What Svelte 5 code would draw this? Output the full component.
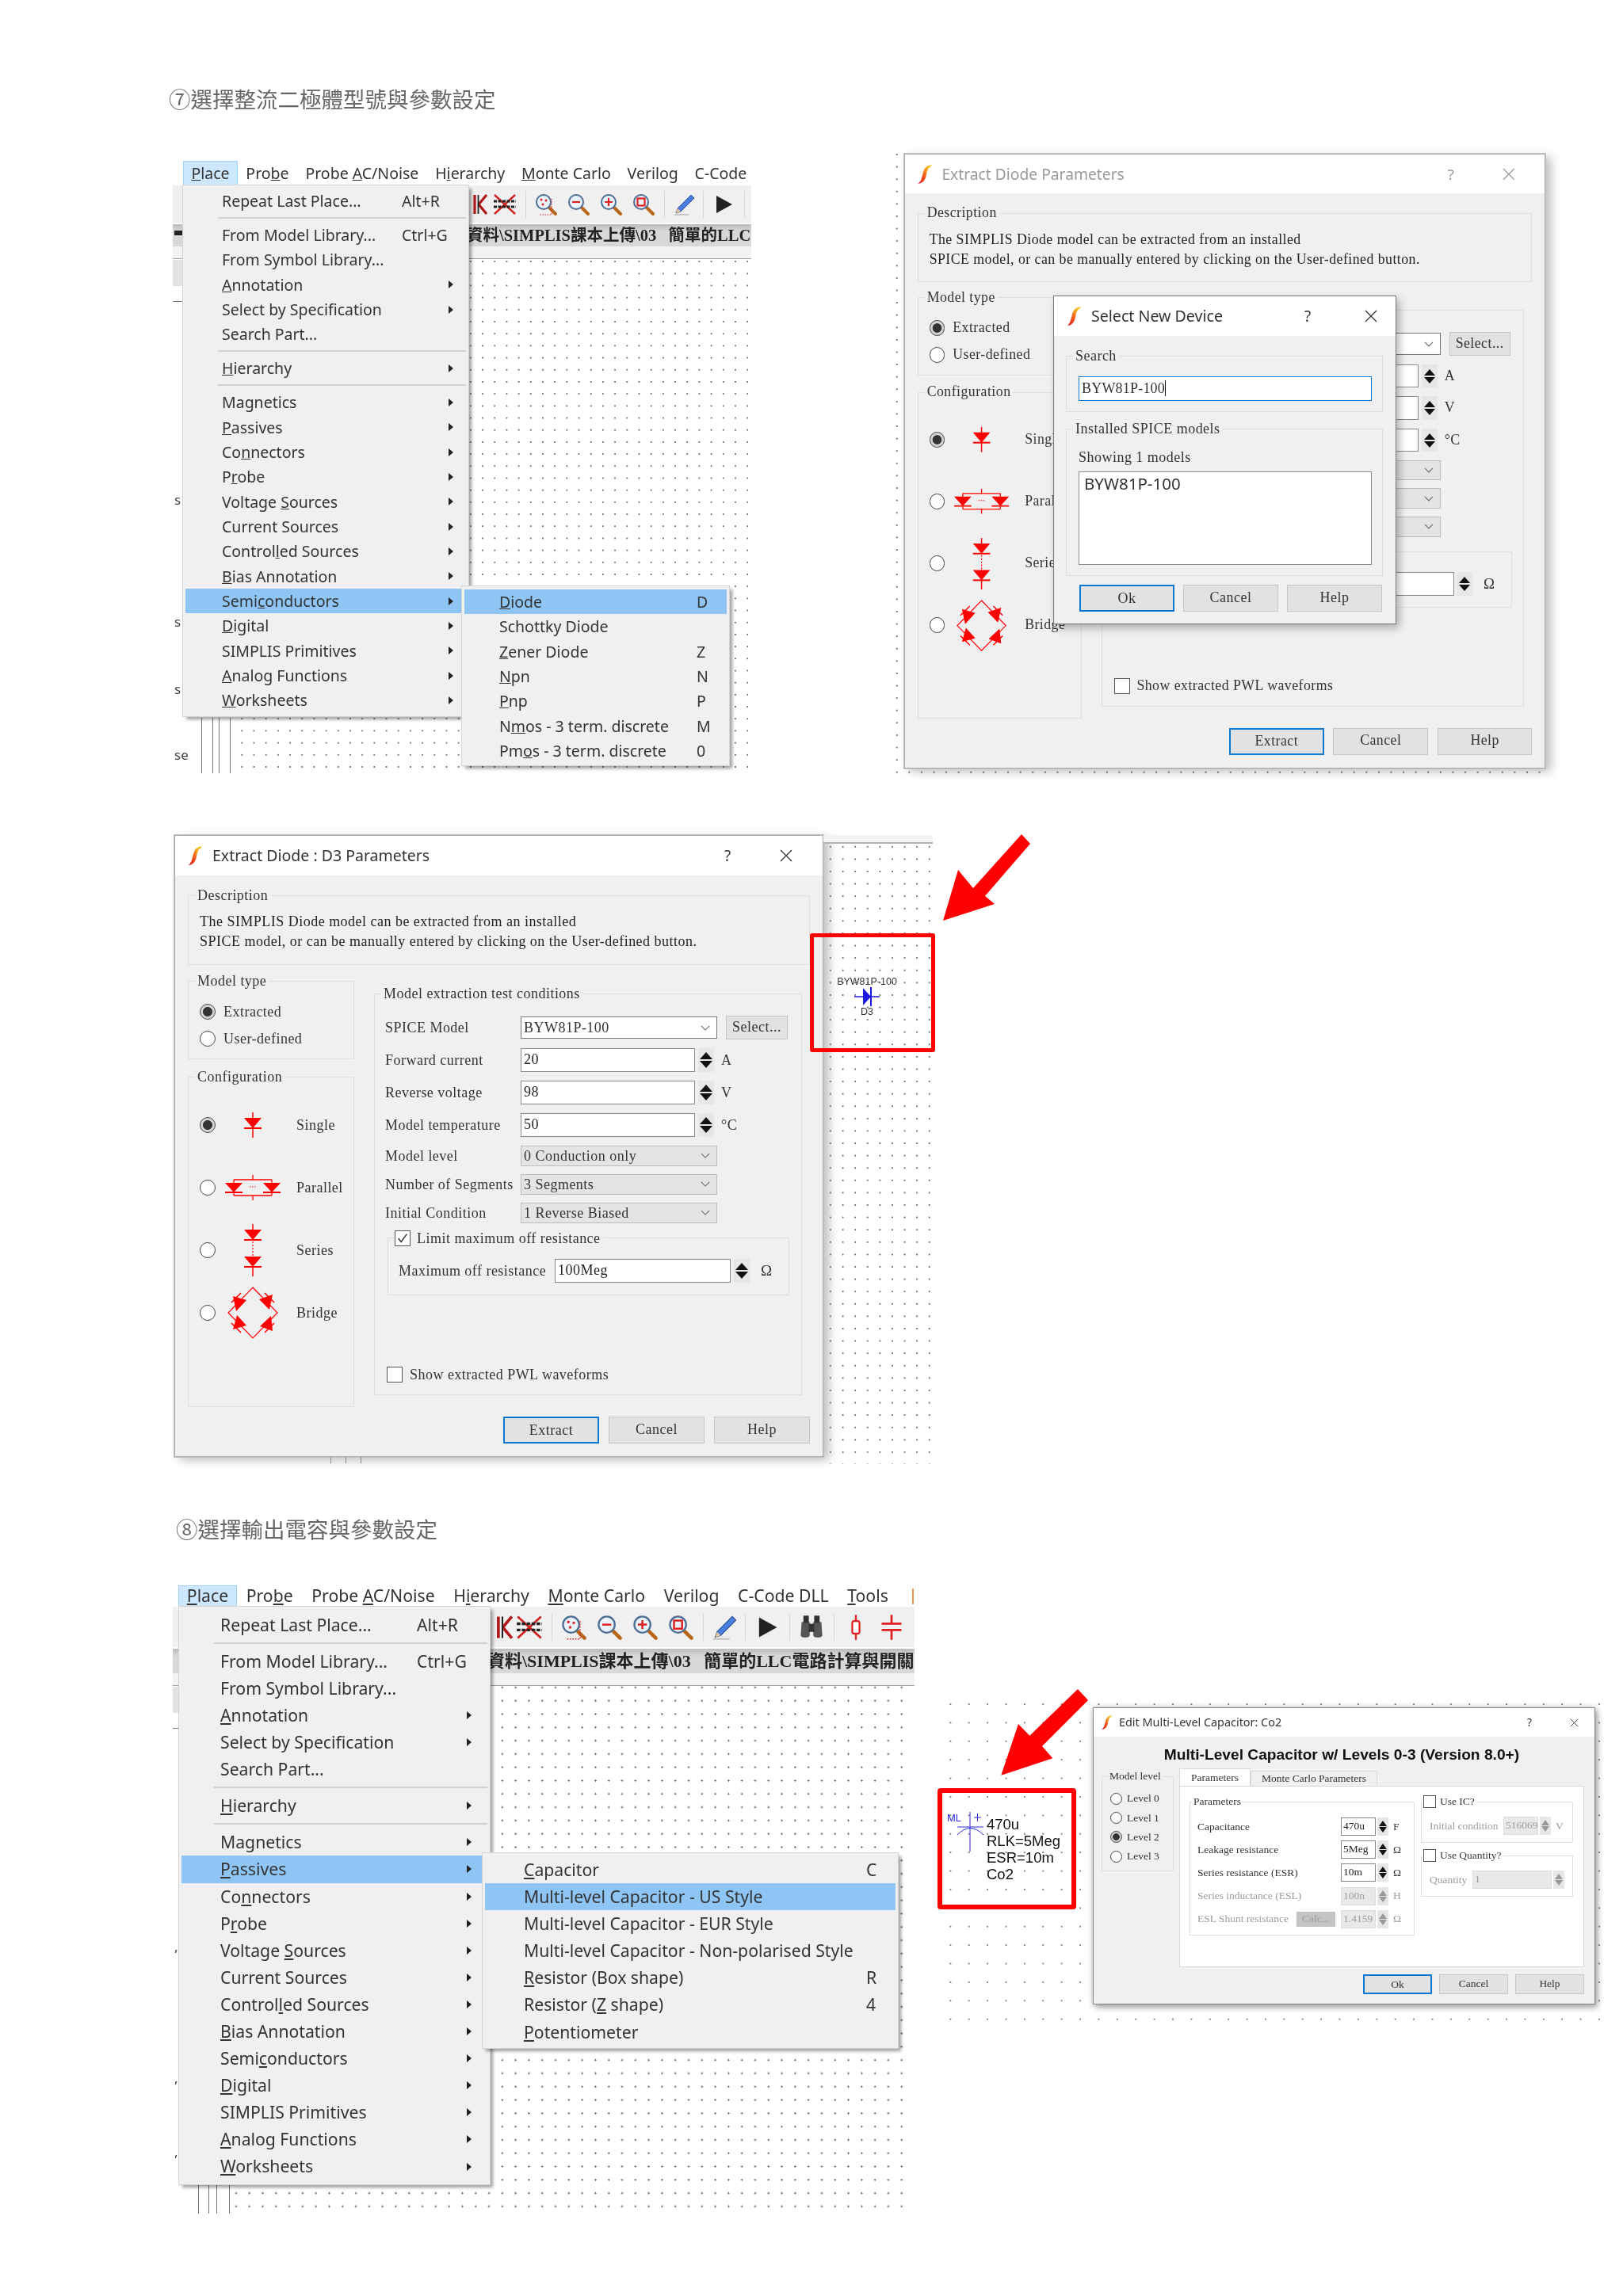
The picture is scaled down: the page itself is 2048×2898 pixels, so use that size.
<script>
  // menu labels: & marks the underlined letter
  const mainMenu = [
    { t: 'Repeat Last Place...', k: 'Alt+R' },
    { sep: true },
    { t: 'From Model Library...', k: 'Ctrl+G' },
    { t: 'From Symbol Library...' },
    { t: '&Annotation', sub: true },
    { t: 'Select by Specification', sub: true },
    { t: 'Search Part...' },
    { sep: true },
    { t: '&Hierarchy', sub: true },
    { sep: true },
    { t: 'Magnetics', sub: true },
    { t: '&Passives', sub: true },
    { t: 'Co&nnectors', sub: true },
    { t: 'P&robe', sub: true },
    { t: 'Voltage &Sources', sub: true },
    { t: 'Current Sources', sub: true },
    { t: 'Control&led Sources', sub: true },
    { t: '&Bias Annotation', sub: true },
    { t: 'Semi&conductors', sub: true },
    { t: '&Digital', sub: true },
    { t: 'SIMPLIS Primitives', sub: true },
    { t: '&Analog Functions', sub: true },
    { t: '&Worksheets', sub: true }
  ];
  const semiMenu = [
    { t: '&Diode', k: 'D' },
    { t: 'Schottky Diode' },
    { t: '&Zener Diode', k: 'Z' },
    { t: '&Npn', k: 'N' },
    { t: '&Pnp', k: 'P' },
    { t: 'N&mos - 3 term. discrete', k: 'M' },
    { t: 'Pm&os - 3 term. discrete', k: '0' }
  ];
  const capMenu = [
    { t: '&Capacitor', k: 'C' },
    { t: 'Multi-level Capacitor - US Style' },
    { t: 'Multi-level Capacitor - EUR Style' },
    { t: 'Multi-level Capacitor - Non-polarised Style' },
    { t: '&Resistor (Box shape)', k: 'R' },
    { t: 'Resistor (&Z shape)', k: '4' },
    { t: '&Potentiometer' }
  ];
  const barShort = ['&Place', 'Pro&be', 'Probe &AC/Noise', 'H&ierarchy', '&Monte Carlo', 'Verilog', 'C-Code'];
  const barLong = ['&Place', 'Pro&be', 'Probe &AC/Noise', 'H&ierarchy', '&Monte Carlo', 'Verilog', 'C-Code DLL', '&Tools'];

  function parts(label) {
    const i = label.indexOf('&');
    if (i < 0) return [label, '', ''];
    return [label.slice(0, i), label[i + 1], label.slice(i + 2)];
  }
</script>

{#snippet mn(label)}
  {@const p = parts(label)}
  {p[0]}<u>{p[1]}</u>{p[2]}
{/snippet}

{#snippet menuRows(items, active)}
  {#each items as item}
    {#if item.sep}
      <div class="msep"></div>
    {:else}
      <div class="mrow" class:on={item.t === active}>
        <span class="mlabel">{@render mn(item.t)}</span>
        <span class="mkey">{item.k ?? ''}</span>
        {#if item.sub}<i class="marrow"></i>{/if}
      </div>
    {/if}
  {/each}
{/snippet}

{#snippet logo(id)}
  <svg class="logo" viewBox="0 0 20 26">
    <defs>
      <linearGradient id={id} x1="0" y1="1" x2="0.6" y2="0">
        <stop offset="0" stop-color="#e5101a" />
        <stop offset="0.5" stop-color="#f2561a" />
        <stop offset="1" stop-color="#f8c425" />
      </linearGradient>
    </defs>
    <path d="M1 25 C5 24 6 18 7.500 13 C9 6 11 2 19 1 L17 4 C14 5 13 9 12 14 C11 20 8 25 1 25Z" fill="url(#{id})" />
  </svg>
{/snippet}

{#snippet closeX()}
  <svg class="closex" viewBox="0 0 16 16"><path d="M1 1L15 15M15 1L1 15" stroke="currentColor" stroke-width="1.300" fill="none" /></svg>
{/snippet}

{#snippet spin(off)}
  <span class="spin" class:off><i class="up"></i><i class="down"></i></span>
{/snippet}

{#snippet chevron()}
  <svg class="chev" viewBox="0 0 14 8"><path d="M1 1L7 7L13 1" stroke="#666" stroke-width="1.300" fill="none" /></svg>
{/snippet}

{#snippet radio(on, label)}
  <span class="radio" class:on></span>{#if label}<span class="rlabel">{label}</span>{/if}
{/snippet}

{#snippet diodeV(cy)}
  <path d={`M-11 ${cy - 7}H11L0 ${cy + 6}Z`} fill="#f00" />
  <path d={`M-11 ${cy + 6}H11`} stroke="#f00" stroke-width="2" />
{/snippet}

{#snippet icoSingle()}
  <svg class="dio" viewBox="-35 0 70 44"><path d="M0 6V38" stroke="#f00" stroke-width="1.500" />{@render diodeV(20)}</svg>
{/snippet}
{#snippet icoParallel()}
  <svg class="dio" viewBox="-35 0 70 44">
    <path d="M-24 12H24M-24 32H24M-24 12V32M24 12V32M0 6V12M0 32V38" stroke="#f00" stroke-width="1.300" fill="none" />
    <path d="M-35 16H-13L-24 28Z M13 16H35L24 28Z" fill="#f00" />
    <path d="M-35 28H-13M13 28H35" stroke="#f00" stroke-width="1.800" />
    <path d="M-4 21H4" stroke="#f00" stroke-width="1.200" stroke-dasharray="1.500 1.500" />
  </svg>
{/snippet}
{#snippet icoSeries()}
  <svg class="dio tall" viewBox="-35 0 70 66">
    <path d="M0 0V14M0 54V66" stroke="#f00" stroke-width="1.500" />
    <path d="M0 22V42" stroke="#f00" stroke-width="1.200" stroke-dasharray="2 2" />
    {@render diodeV(14)}
    {@render diodeV(48)}
  </svg>
{/snippet}
{#snippet icoBridge()}
  <svg class="dio tall" viewBox="-35 0 70 66">
    <path d="M0 1L31 33L0 65L-31 33Z" stroke="#f00" stroke-width="1.200" fill="none" />
    <path d="M-25 12L-8 17L-21 31Z M8 16L25 10L21 29Z M-25 54L-20 36L-8 49Z M9 50L23 37L25 56Z" fill="#f00" />
    <path d="M-27 20L-15 8M27 20L15 8M-27 46L-15 58M27 46L15 58" stroke="#f00" stroke-width="1.500" />
  </svg>
{/snippet}

{#snippet mag(kind)}
  <svg class="tb" viewBox="0 0 30 30">
    <path d="M19 19L27 27" stroke="#b8661a" stroke-width="4" stroke-linecap="round" />
    <circle cx="12" cy="12" r="9" fill="#eaf2fb" stroke="#4c6e94" stroke-width="2" />
    {#if kind === 'fit'}
      <circle cx="9" cy="9" r="1.500" fill="#d22" /><circle cx="15" cy="10" r="1.500" fill="#d22" /><circle cx="11" cy="15" r="1.500" fill="#d22" />
      <path d="M22 8V28H6" stroke="#d22" stroke-width="1.200" stroke-dasharray="1.500 1.500" fill="none" />
    {:else if kind === 'minus'}
      <path d="M7 12H17" stroke="#d22" stroke-width="2.200" />
    {:else if kind === 'plus'}
      <path d="M7 12H17M12 7V17" stroke="#d22" stroke-width="2.200" />
    {:else}
      <rect x="7.500" y="7.500" width="9" height="9" fill="none" stroke="#d22" stroke-width="2.200" />
    {/if}
  </svg>
{/snippet}

{#snippet toolbarStart()}
  <svg class="tb tight" viewBox="0 0 30 30"><path d="M14 3V27M19 15L29 3M19 15L29 27" stroke="#b01818" stroke-width="3.200" fill="none" /><path d="M18.500 3V27" stroke="#222" stroke-width="1.800" /></svg>
  <svg class="tb" viewBox="0 0 30 30">
    <path d="M2 3L28 27M28 3L2 27" stroke="#d02020" stroke-width="2.400" />
    <path d="M1 11H29M1 18H29" stroke="#222" stroke-width="3" stroke-dasharray="4 1.500" />
  </svg>
  <i class="tsep"></i>
  {@render mag('fit')}{@render mag('minus')}{@render mag('plus')}{@render mag('box')}
  <i class="tsep"></i>
  <svg class="tb tight2" viewBox="0 0 30 30">
    <path d="M6 20L23 3L27 7L10 24L4 26Z" fill="#4a7fe0" stroke="#2d4f95" stroke-width="1" />
    <path d="M4 26L6 20L10 24Z" fill="#e8c79a" />
    <path d="M2 28H20" stroke="#bbb" stroke-width="1.500" />
  </svg>
  <i class="tsep"></i>
  <svg class="tb" viewBox="0 0 30 30"><path d="M6 4L26 15L6 26Z" fill="#222" /></svg>
{/snippet}

{#snippet shotHead(items)}
  <div class="menubar">
    {#each items as it, i}
      <span class="mbitem" class:sel={i === 0}>{@render mn(it)}</span>
    {/each}
  </div>
{/snippet}

{#snippet extractDialog(id, title)}
  <div class="dlg">
    <div class="titlebar">
      {@render logo(id)}
      <span class="ttl">{title}</span>
      <span class="qm">?</span>
      {@render closeX()}
    </div>
    <div class="dbody">
      <fieldset class="desc">
        <legend>Description</legend>
        <p>The SIMPLIS Diode model can be extracted from an installed</p>
        <p>SPICE model, or can be manually entered by clicking on the User-defined button.</p>
      </fieldset>
      <div class="cols">
        <div class="leftcol">
          <fieldset class="mtype">
            <legend>Model type</legend>
            <div class="rrow">{@render radio(true, 'Extracted')}</div>
            <div class="rrow">{@render radio(false, 'User-defined')}</div>
          </fieldset>
          <fieldset class="config">
            <legend>Configuration</legend>
            <div class="crow">{@render radio(true)}<span class="cico">{@render icoSingle()}</span><span>Single</span></div>
            <div class="crow">{@render radio(false)}<span class="cico">{@render icoParallel()}</span><span>Parallel</span></div>
            <div class="crow">{@render radio(false)}<span class="cico">{@render icoSeries()}</span><span>Series</span></div>
            <div class="crow">{@render radio(false)}<span class="cico">{@render icoBridge()}</span><span>Bridge</span></div>
          </fieldset>
        </div>
        <fieldset class="cond">
          <legend>Model extraction test conditions</legend>
          <div class="frow tall">
            <span class="flabel">SPICE Model</span>
            <span class="combo white"><span>BYW81P-100</span>{@render chevron()}</span>
            <span class="pbtn sel">Select...</span>
          </div>
          <div class="frow tall"><span class="flabel">Forward current</span><span class="inp sp">20</span>{@render spin()}<span class="unit">A</span></div>
          <div class="frow tall"><span class="flabel">Reverse voltage</span><span class="inp sp">98</span>{@render spin()}<span class="unit">V</span></div>
          <div class="frow tall"><span class="flabel">Model temperature</span><span class="inp sp">50</span>{@render spin()}<span class="unit">°C</span></div>
          <div class="frow"><span class="flabel">Model level</span><span class="combo"><span>0 Conduction only</span>{@render chevron()}</span></div>
          <div class="frow"><span class="flabel">Number of Segments</span><span class="combo"><span>3 Segments</span>{@render chevron()}</span></div>
          <div class="frow"><span class="flabel">Initial Condition</span><span class="combo"><span>1 Reverse Biased</span>{@render chevron()}</span></div>
          <fieldset class="limit">
            <legend><span class="check on"><svg viewBox="0 0 20 20"><path d="M4 10L8 15L16 4" stroke="#333" stroke-width="1.600" fill="none" /></svg></span>Limit maximum off resistance</legend>
            <div class="maxrow">
              <span class="maxlabel">Maximum off resistance</span><span class="inp mx">100Meg</span>{@render spin()}<span class="unit om">Ω</span>
            </div>
          </fieldset>
          <div class="showpwl"><span class="check"></span>Show extracted PWL waveforms</div>
        </fieldset>
      </div>
      <div class="btns">
        <span class="btn def">Extract</span><span class="btn">Cancel</span><span class="btn">Help</span>
      </div>
    </div>
  </div>
{/snippet}

<main class="page">
  <h2 class="head first">⑦選擇整流二極體型號與參數設定</h2>

  <div class="row one">
    <section class="shot s7">
      {@render shotHead(barShort)}
      <div class="toolbar">{@render toolbarStart()}<i class="tsep"></i></div>
      <div class="pathbar"><span>資料\SIMPLIS課本上傳\03   簡單的LLC電路計算與開關</span></div>
      <div class="strip"></div>
      <div class="lower">
        <div class="gutter">
          <b class="bit mark"></b><b class="bit block"></b><b class="bit hline"></b>
          <em class="bit l1">s</em><em class="bit l2">s</em><em class="bit l3">s</em><em class="bit l4">se</em>
          <b class="bit v1"></b><b class="bit v2"></b><b class="bit v3"></b>
        </div>
        <div class="dots"></div>
      </div>
      <div class="menu main">{@render menuRows(mainMenu, 'Semi&conductors')}</div>
      <div class="menu sub">{@render menuRows(semiMenu, '&Diode')}</div>
    </section>

    <section class="wrapa dots">
      {@render extractDialog('lg1', 'Extract Diode Parameters')}
      <div class="dlg2">
        <div class="titlebar">
          {@render logo('lg2')}
          <span class="ttl">Select New Device</span>
          <span class="qm">?</span>
          {@render closeX()}
        </div>
        <div class="d2body">
          <fieldset class="search">
            <legend>Search</legend>
            <div class="sinput">BYW81P-100<i class="caret"></i></div>
          </fieldset>
          <fieldset class="installed">
            <legend>Installed SPICE models</legend>
            <div class="showing">Showing 1 models</div>
            <div class="listbox">BYW81P-100</div>
          </fieldset>
          <div class="btns2">
            <span class="btn def">Ok</span><span class="btn">Cancel</span><span class="btn">Help</span>
          </div>
        </div>
      </div>
    </section>
  </div>

  <div class="row two">
    {@render extractDialog('lg3', 'Extract Diode : D3 Parameters')}
    <section class="cnvb">
      <div class="cnvtop"></div>
      <div class="dots"></div>
      <div class="redbox rb">
        <span class="pname">BYW81P-100</span>
        <svg class="symd" viewBox="0 0 32 24">
          <path d="M0 12H32" stroke="#1a1ae0" stroke-width="1.500" />
          <path d="M11 1L21 12L11 23Z" fill="#1a1ae0" />
          <path d="M21 0V24" stroke="#1a1ae0" stroke-width="2" />
        </svg>
        <span class="pname">D3</span>
      </div>
    </section>
    <svg class="arrow ab" viewBox="0 0 115 112"><polygon points="0,109 19,45 38,68 99,0 110,12 53,78 65,88" fill="#f00" /></svg>
    <div class="under"><b></b><b></b><b></b></div>
  </div>

  <h2 class="head second">⑧選擇輸出電容與參數設定</h2>

  <div class="row three">
    <section class="shot s8">
      {@render shotHead(barLong)}
      <i class="bartick"></i>
      <div class="toolbar">
        {@render toolbarStart()}
        <i class="tsep"></i>
        <svg class="tb" viewBox="0 0 30 30">
          <path d="M4 9H13V24C13 27 3 27 3 24Z M17 9H26L27 24C27 27 17 27 17 24Z" fill="#555" />
          <path d="M6 2H12V10H6Z M18 2H24V10H18Z M12 11H18V20H12Z" fill="#333" />
        </svg>
        <i class="tsep"></i>
        <svg class="tb" viewBox="0 0 30 30"><path d="M15 1V8M15 22V29" stroke="#e02020" stroke-width="2" /><rect x="11" y="8" width="8" height="14" rx="2" fill="#fff" stroke="#e02020" stroke-width="2" /></svg>
        <svg class="tb" viewBox="0 0 30 30"><path d="M15 1V11M15 18V29M4 11H26M4 18H26" stroke="#e02020" stroke-width="2.400" /></svg>
      </div>
      <div class="pathbar"><span>資料\SIMPLIS課本上傳\03   簡單的LLC電路計算與開關電源設計</span></div>
      <div class="strip"></div>
      <div class="lower">
        <div class="gutter">
          <b class="bit block"></b><b class="bit hline"></b>
          <em class="bit l1">,</em><em class="bit l2">,</em><em class="bit l3">,</em>
          <b class="bit v1"></b><b class="bit v2"></b><b class="bit v3"></b>
        </div>
        <div class="dots"></div>
      </div>
      <div class="menu main">{@render menuRows(mainMenu, '&Passives')}</div>
      <div class="menu sub">{@render menuRows(capMenu, 'Multi-level Capacitor - US Style')}</div>
    </section>

    <section class="cnvc dots">
      <div class="redbox rc">
        <svg class="symc" viewBox="0 0 52 70">
          <text x="4" y="22" class="ml">ML</text>
          <path d="M33 10V29M17 29H50M38 17H47M42.500 12V22" stroke="#2a2ae0" stroke-width="1" fill="none" />
          <path d="M17 39Q33 22 50 39M33 29V60" stroke="#2a2ae0" stroke-width="1" fill="none" />
        </svg>
        <div class="captext"><div>470u</div><div>RLK=5Meg</div><div>ESR=10m</div><div>Co2</div></div>
      </div>
      <div class="dlg3">
        <div class="titlebar">
          {@render logo('lg4')}
          <span class="ttl">Edit Multi-Level Capacitor: Co2</span>
          <span class="qm">?</span>
          {@render closeX()}
        </div>
        <div class="c-head">Multi-Level Capacitor w/ Levels 0-3 (Version 8.0+)</div>
        <div class="c-cols">
          <fieldset class="levels">
            <legend>Model level</legend>
            <div class="lv">{@render radio(false, 'Level 0')}</div>
            <div class="lv">{@render radio(false, 'Level 1')}</div>
            <div class="lv">{@render radio(true, 'Level 2')}</div>
            <div class="lv">{@render radio(false, 'Level 3')}</div>
          </fieldset>
          <div class="tabs">
            <div class="tabhead"><span class="tab cur">Parameters</span><span class="tab">Monte Carlo Parameters</span></div>
            <div class="pane">
              <fieldset class="params">
                <legend>Parameters</legend>
                <div class="prow"><span class="plabel">Capacitance</span><span class="cinp">470u</span>{@render spin()}<span class="cu">F</span></div>
                <div class="prow"><span class="plabel">Leakage resistance</span><span class="cinp">5Meg</span>{@render spin()}<span class="cu">Ω</span></div>
                <div class="prow"><span class="plabel">Series resistance (ESR)</span><span class="cinp">10m</span>{@render spin()}<span class="cu">Ω</span></div>
                <div class="prow dis"><span class="plabel">Series inductance (ESL)</span><span class="cinp">100n</span>{@render spin(true)}<span class="cu">H</span></div>
                <div class="prow dis"><span class="plabel short">ESL Shunt resistance</span><span class="calc">Calc...</span><span class="cinp">1.4159</span>{@render spin(true)}<span class="cu">Ω</span></div>
              </fieldset>
              <div class="rightgroups">
                <fieldset class="opt">
                  <legend><span class="check"></span>Use IC?</legend>
                  <div class="prow dis"><span class="ol1">Initial condition</span><span class="cinp">516069</span>{@render spin(true)}<span class="cu">V</span></div>
                </fieldset>
                <fieldset class="opt">
                  <legend><span class="check"></span>Use Quantity?</legend>
                  <div class="prow dis"><span class="ol2">Quantity</span><span class="cinp q">1</span>{@render spin(true)}</div>
                </fieldset>
              </div>
            </div>
          </div>
        </div>
        <div class="btns3"><span class="btn def">Ok</span><span class="btn">Cancel</span><span class="btn">Help</span></div>
      </div>
    </section>
    <svg class="arrow ac" viewBox="0 0 110 110"><polygon points="0.300,108.700 22,44 36.300,58.700 97,0 110,14 52,72 65.300,87.300" fill="#f00" /></svg>
  </div>
</main>

<style>
  :global(body) {
    margin: 0;
    background: #fff;
  }

  .page {
    width: 2048px;
    height: 2898px;
    position: relative;
    overflow: hidden;
    background: #fff;
    font-family: "Noto Sans", "Noto Sans CJK TC", sans-serif;
    filter: blur(0.45px);
  }

  .head {
    margin: 0;
    height: 40px;
    line-height: 40px;
    font-size: 27.500px;
    font-weight: 400;
    color: #666;
    font-family: "Noto Sans CJK TC", "Noto Sans", sans-serif;
    white-space: nowrap;
  }
  .head.first {
    padding: 104px 0 0 213px;
  }
  .head.second {
    margin-top: 61px;
    padding-left: 222px;
  }

  .row {
    display: flex;
    align-items: flex-start;
    position: relative;
  }
  .row.one {
    margin: 56px 0 0 218px;
    height: 776px;
  }
  .row.two {
    margin: 78px 0 0 220px;
    height: 794px;
  }
  .row.three {
    margin: 48px 0 0 218px;
    height: 797px;
  }

  .dots {
    background-image: radial-gradient(circle, #777 1px, transparent 1.300px);
  }

  /* menu screenshots */
  .shot {
    position: relative;
    display: flex;
    flex-direction: column;
    overflow: hidden;
    flex: none;
    color: #333;
  }
  .s7 {
    width: 730px;
    height: 776px;
    padding-top: 3px;
    box-sizing: border-box;
    --fs: 19.500px;
    --rh: 31.350px;
    --ic: 30px;
  }
  .s8 {
    width: 936px;
    height: 797px;
    padding-top: 4px;
    box-sizing: border-box;
    --fs: 21.200px;
    --rh: 34.100px;
    --ic: 34px;
  }

  .menubar {
    display: flex;
    height: 31px;
    flex: none;
    font-size: var(--fs);
    line-height: 31px;
    padding-left: 13px;
    white-space: nowrap;
  }
  .s8 .menubar {
    height: 27px;
    line-height: 25px;
    padding-left: 7px;
  }
  .mbitem {
    padding: 0 10.400px;
  }
  .s8 .mbitem {
    padding: 0 11.800px;
  }
  .s8 .mbitem.sel {
    padding: 0 10.800px;
  }
  .mbitem.sel {
    background: #cde8fe;
    box-shadow: inset 0 0 0 1px #9fd3fb;
  }
  .bartick {
    position: absolute;
    left: 933px;
    top: 8px;
    width: 2px;
    height: 20px;
    background: #d99a5a;
  }
  .toolbar {
    height: 47px;
    flex: none;
    display: flex;
    align-items: center;
    gap: 11px;
    padding-left: 367px;
    background: #f0f0f0;
  }
  .s8 .toolbar {
    height: 51px;
    padding-left: 395px;
  }
  .tb {
    width: var(--ic);
    height: var(--ic);
    flex: none;
  }
  .tight {
    margin-right: -4px;
  }
  .s8 .tight {
    margin-right: -7px;
  }
  .tight2 {
    margin-right: -3px;
  }
  .tsep {
    width: 1px;
    height: 34px;
    margin-right: -1px;
    background: #d6d6d6;
    flex: none;
  }
  .pathbar {
    margin-top: 2px;
    height: 28px;
    flex: none;
    background: linear-gradient(#bbb, #d8d8d8 30%, #d8d8d8);
    overflow: hidden;
    padding-left: 371px;
    font: bold 20.500px/28px "Liberation Serif", "Noto Sans CJK TC", serif;
    color: #222;
    white-space: pre;
  }
  .s8 .pathbar {
    height: 31px;
    line-height: 31px;
    font-size: 22px;
    padding-left: 397px;
  }
  .strip {
    height: 15px;
    flex: none;
    background: #f3f3f3;
    border-bottom: 1px solid #a0a0a0;
  }
  .lower {
    flex: 1;
    display: flex;
    position: relative;
  }
  .gutter {
    width: 73px;
    flex: none;
    position: relative;
  }
  .lower .dots {
    flex: 1;
    background-size: 15.200px 15.200px;
    background-position: 6.700px 10.700px;
  }
  .s8 .lower .dots {
    margin-right: 14px;
    background-size: 16.800px 16.800px;
    background-position: 15.300px 10.300px;
  }
  .bit {
    position: absolute;
    display: block;
    font-style: normal;
  }
  .mark {
    left: 2px;
    top: -36px;
    width: 12px;
    height: 6px;
    background: #222;
  }
  .block {
    left: 0;
    top: 1px;
    width: 13px;
    height: 33px;
    background: #e3e3e3;
  }
  .hline {
    left: 0;
    top: 53px;
    width: 13px;
    height: 1px;
    background: #777;
  }
  .l1, .l2, .l3, .l4 {
    left: 2px;
    font-size: 17px;
    line-height: 18px;
    color: #444;
  }
  .s7 .l1 { top: 295px; }
  .s7 .l2 { top: 449px; }
  .s7 .l3 { top: 534px; }
  .s7 .l4 { top: 617px; }
  .s8 .l1 { top: 320px; }
  .s8 .l2 { top: 486px; }
  .s8 .l3 { top: 579px; }
  .v1, .v2, .v3 {
    bottom: 0;
    width: 1px;
    background: #777;
  }
  .s7 .v1, .s7 .v2, .s7 .v3 { height: 70px; }
  .s8 .v1, .s8 .v2, .s8 .v3 { height: 38px; }
  .v1 { left: 36px; box-shadow: 14px 0 0 #777; }
  .v2 { left: 58px; }
  .v3 { left: 72px; }
  .s8 .v1 { left: 32px; box-shadow: 13px 0 0 #777; }
  .s8 .v2 { left: 55px; }
  .s8 .v3 { left: 71px; }

  .menu {
    position: absolute;
    background: #f0f0f0;
    box-shadow: 0 0 0 1px #d4d4d4, 4px 4px 4px rgba(0, 0, 0, 0.38);
    font-size: var(--fs);
    white-space: nowrap;
    box-sizing: border-box;
  }
  .s7 .menu.main {
    left: 13px;
    top: 34px;
    width: 360px;
    height: 670px;
    padding: 4px 3px;
    --pad: 46px;
    --lw: 227px;
    --aw: 59px;
  }
  .s7 .menu.sub {
    left: 365px;
    top: 540px;
    width: 337px;
    height: 226px;
    padding: 4px 3px;
    --pad: 44px;
    --lw: 249px;
  }
  .s8 .menu.main {
    left: 8px;
    top: 31px;
    width: 392px;
    height: 729px;
    padding: 6px 3px;
    --pad: 49px;
    --lw: 248px;
    --aw: 63px;
  }
  .s8 .menu.sub {
    left: 391px;
    top: 342px;
    width: 524px;
    height: 246px;
    padding: 4px 3px;
    --pad: 49px;
    --lw: 432px;
  }
  .mrow {
    height: var(--rh);
    line-height: var(--rh);
    padding-left: var(--pad);
    display: flex;
    align-items: center;
  }
  .mrow.on {
    background: #8fc5f5;
  }
  .mlabel {
    width: var(--lw);
    flex: none;
  }
  .mkey {
    width: var(--aw, 30px);
    flex: none;
  }
  .marrow {
    width: 0;
    height: 0;
    border-left: 6px solid #222;
    border-top: 5px solid transparent;
    border-bottom: 5px solid transparent;
    flex: none;
  }
  .msep {
    height: 11.600px;
    margin-left: 41px;
    background: linear-gradient(#d0d0d0, #d0d0d0) center / 100% 2px no-repeat;
  }
  .s8 .msep {
    height: 11.900px;
  }

  /* dialogs */
  .wrapa {
    margin: -10px 0 0 182px;
    width: 823px;
    height: 788px;
    position: relative;
    flex: none;
    padding: 4px 0 0 11px;
    box-sizing: border-box;
    background-size: 15.600px 15.600px;
    background-position: -6.100px 12.800px;
  }
  .wrapa .dlg {
    zoom: 0.988;
  }
  .wrapa .dlg .ttl {
    color: #9a9a9a;
  }
  .wrapa .dlg .qm, .wrapa .dlg .closex {
    color: #999;
  }

  .dlg {
    width: 819px;
    height: 785px;
    flex: none;
    background: #f0f0f0;
    box-sizing: border-box;
    border: 1px solid #aaa;
    box-shadow: 0 0 0 1px #c4c4c4, 7px 4px 12px rgba(0, 0, 0, 0.26);
    color: #333;
    font: 18px/20px "Liberation Serif", serif;
    letter-spacing: 0.480px;
  }
  .titlebar {
    background: #fff;
    height: 50px;
    display: flex;
    align-items: center;
    padding-left: 15px;
    box-sizing: border-box;
    font-family: "Noto Sans", sans-serif;
    letter-spacing: 0;
    color: #333;
    flex: none;
  }
  .logo {
    width: 20px;
    height: 26px;
    flex: none;
  }
  .ttl {
    font-size: 19.500px;
    margin-left: 12px;
    white-space: nowrap;
    width: 646px;
  }
  .qm {
    width: 70px;
    font-size: 19px;
  }
  .closex {
    width: 16px;
    height: 16px;
    flex: none;
  }
  .dbody {
    padding: 0 16px;
  }
  fieldset {
    border: 1.500px solid #dedede;
    margin: 0;
    padding: 0;
    min-width: 0;
    box-sizing: border-box;
  }
  legend {
    padding: 0 3px;
    margin-left: 8px;
    line-height: 20px;
    white-space: nowrap;
  }
  .desc {
    margin-top: 15px;
    height: 98px;
  }
  .desc p {
    margin: 0 0 0 14px;
    line-height: 25px;
    white-space: nowrap;
    color: #222;
  }
  .desc p:first-of-type {
    margin-top: 11px;
  }
  .cols {
    display: flex;
    gap: 25px;
  }
  .leftcol {
    width: 210px;
    flex: none;
  }
  .mtype {
    margin-top: 10px;
    height: 109px;
    padding: 12px 0 0 14px;
  }
  .mtype legend, .config legend {
    margin-left: -6px;
  }
  .rrow {
    height: 34px;
    display: flex;
    align-items: center;
  }
  .radio {
    width: 20px;
    height: 20px;
    border-radius: 50%;
    border: 1.500px solid #444;
    background: #fff;
    box-sizing: border-box;
    flex: none;
  }
  .radio.on {
    background: radial-gradient(circle, #333 0 44%, #d4d4d4 50%);
  }
  .rlabel {
    margin-left: 10px;
    white-space: nowrap;
  }
  .config {
    margin-top: 12px;
    height: 427px;
    padding: 11px 0 0 14px;
  }
  .crow {
    height: 79px;
    display: flex;
    align-items: center;
    white-space: nowrap;
  }
  .cico {
    width: 70px;
    margin: 0 20px 0 12px;
    display: flex;
    justify-content: center;
    flex: none;
  }
  .dio {
    width: 70px;
    height: 44px;
    flex: none;
  }
  .dio.tall {
    height: 66px;
  }
  .cond {
    margin-top: 26px;
    height: 517px;
    width: 540px;
    flex: none;
    padding: 12.500px 0 0 13px;
  }
  .cond > legend {
    margin-left: -5px;
  }
  .frow {
    height: 36px;
    display: flex;
    align-items: center;
  }
  .frow.tall {
    height: 41px;
  }
  .flabel {
    width: 171px;
    flex: none;
    white-space: nowrap;
  }
  .inp {
    background: #fff;
    border: 1.500px solid #8a8a8a;
    box-sizing: border-box;
    height: 30px;
    line-height: 27px;
    padding-left: 3px;
    flex: none;
    color: #222;
  }
  .inp.sp {
    width: 220px;
  }
  .inp.mx {
    width: 222px;
  }
  .spin {
    display: flex;
    flex-direction: column;
    justify-content: center;
    gap: 2px;
    width: 20px;
    height: 30px;
    margin-left: 4px;
    flex: none;
    background: #e6e6e6;
  }
  .spin i {
    display: block;
    width: 0;
    height: 0;
    margin: 0 auto;
    border-left: 8px solid transparent;
    border-right: 8px solid transparent;
  }
  .spin .up {
    border-bottom: 9px solid #111;
  }
  .spin .down {
    border-top: 9px solid #111;
  }
  .spin.off .up {
    border-bottom-color: #999;
  }
  .spin.off .down {
    border-top-color: #999;
  }
  .unit {
    margin-left: 9px;
  }
  .unit.om {
    margin-left: 14px;
    font-size: 19px;
  }
  .combo {
    width: 248px;
    height: 26px;
    box-sizing: border-box;
    flex: none;
    background: #e4e4e4;
    border: 1.500px solid #bcbcbc;
    display: flex;
    align-items: center;
    justify-content: space-between;
    padding: 0 8px 0 3px;
  }
  .combo.white {
    background: #fff;
    border-color: #777;
    height: 28px;
  }
  .chev {
    width: 12px;
    height: 7px;
    flex: none;
  }
  .pbtn {
    margin-left: 11px;
    width: 78px;
    height: 30px;
    line-height: 27px;
    text-align: center;
    box-sizing: border-box;
    background: #e2e2e2;
    border: 1.500px solid #c4c4c4;
  }
  .limit {
    margin: 4px 0 0 3px;
    width: 507px;
    height: 82px;
    padding: 16px 0 0 13px;
  }
  .limit legend {
    display: flex;
    align-items: center;
    gap: 8px;
    margin-left: -5px;
    padding: 0 3px 0 0;
  }
  .check {
    width: 20px;
    height: 20px;
    border: 1.500px solid #555;
    background: #fff;
    box-sizing: border-box;
    display: inline-block;
    flex: none;
  }
  .check svg {
    display: block;
    width: 100%;
    height: 100%;
  }
  .maxrow {
    display: flex;
    align-items: center;
  }
  .maxlabel {
    width: 197px;
    flex: none;
    white-space: nowrap;
  }
  .showpwl {
    margin: 90px 0 0 2px;
    display: flex;
    align-items: center;
    gap: 9px;
    height: 20px;
    white-space: nowrap;
  }
  .btn {
    box-sizing: border-box;
    text-align: center;
    background: #e2e2e2;
    border: 1.500px solid #c6c6c6;
    flex: none;
  }
  .btn.def {
    border: 2.500px solid #0a78d2;
  }
  .btns {
    margin-top: 12px;
    display: flex;
    justify-content: flex-end;
    gap: 12px;
  }
  .btns .btn {
    width: 121px;
    height: 34px;
    line-height: 30px;
  }

  /* select new device */
  .dlg2 {
    position: absolute;
    left: 199px;
    top: 183px;
    width: 433px;
    height: 415px;
    background: #f0f0f0;
    border: 1px solid #777;
    box-sizing: border-box;
    box-shadow: 4px 5px 10px rgba(0, 0, 0, 0.28);
    color: #333;
    font: 18px/20px "Liberation Serif", serif;
    letter-spacing: 0.480px;
  }
  .dlg2 .ttl {
    font-size: 19.600px;
    width: 269px;
  }
  .dlg2 .qm {
    width: 76px;
  }
  .d2body {
    padding: 0 16px 0 15px;
  }
  .search {
    margin-top: 15px;
    height: 81px;
    padding: 16px 0 0 15px;
  }
  .search legend, .installed legend {
    margin-left: -7px;
  }
  .sinput {
    width: 370px;
    height: 31px;
    box-sizing: border-box;
    background: #fff;
    border: 1.500px solid #0a78d2;
    padding-left: 3px;
    line-height: 28px;
    font-size: 18px;
    letter-spacing: 0.200px;
  }
  .caret {
    display: inline-block;
    width: 1px;
    height: 20px;
    background: #111;
    vertical-align: -4px;
  }
  .installed {
    margin-top: 11px;
    height: 196px;
    padding: 16px 0 0 15px;
  }
  .showing {
    height: 20px;
  }
  .listbox {
    margin-top: 8px;
    width: 370px;
    height: 118px;
    background: #fff;
    border: 1.500px solid #8a8a8a;
    box-sizing: border-box;
    padding-left: 6px;
    font: 20.500px/29px "Noto Sans", sans-serif;
    letter-spacing: 0;
  }
  .btns2 {
    margin: 11px 0 0 17px;
    display: flex;
    gap: 11px;
  }
  .btns2 .btn {
    width: 120px;
    height: 34px;
    line-height: 30px;
  }

  /* right of the second dialog */
  .cnvb {
    width: 138px;
    height: 794px;
    flex: none;
    position: relative;
    display: flex;
    flex-direction: column;
  }
  .cnvtop {
    height: 9px;
    background: #f4f4f4;
    border-bottom: 2px solid #b5b5b5;
    flex: none;
  }
  .cnvb .dots {
    flex: 1;
    background-size: 15.600px 15.600px;
    background-position: 1.200px 11.600px;
  }
  .redbox {
    position: absolute;
    border: 5px solid #f00;
    box-sizing: border-box;
    border-radius: 3px;
  }
  .rb {
    left: -17px;
    top: 124px;
    width: 158px;
    height: 150px;
    display: flex;
    flex-direction: column;
    align-items: center;
    padding: 49px 14px 0 0;
    background: transparent;
  }
  .pname {
    font: 12.500px/14px "Liberation Sans", sans-serif;
    color: #333;
  }
  .symd {
    width: 32px;
    height: 24px;
    flex: none;
  }
  .arrow {
    position: absolute;
    flex: none;
  }
  .ab {
    left: 970px;
    top: -1px;
    width: 115px;
    height: 112px;
  }
  .under {
    position: absolute;
    left: 197px;
    top: 785px;
    display: flex;
    gap: 18px;
  }
  .under b {
    width: 1px;
    height: 8px;
    background: #888;
  }

  /* capacitor canvas */
  .cnvc {
    margin: 148px 0 0 36px;
    width: 840px;
    height: 410px;
    flex: none;
    position: relative;
    padding: 10px 0 0 189px;
    box-sizing: border-box;
    background-image: radial-gradient(circle, #888 1px, transparent 1.300px);
    background-size: 23.400px 23.400px;
    background-position: -2.400px -5.700px;
  }
  .rc {
    left: -7px;
    top: 112px;
    width: 175px;
    height: 153px;
    border-width: 6px;
    border-radius: 4px;
    display: flex;
    padding-top: 29px;
  }
  .symc {
    position: absolute;
    left: 2px;
    top: 14px;
    width: 52px;
    height: 70px;
  }
  .ml {
    font: 13px "Liberation Sans", sans-serif;
    fill: #2a2ae0;
  }
  .captext {
    margin-left: 56px;
    font: 18.500px/21px "Liberation Sans", sans-serif;
    color: #111;
    white-space: nowrap;
  }
  .ac {
    left: 1045px;
    top: 135px;
    width: 110px;
    height: 110px;
  }

  .dlg3 {
    width: 634px;
    height: 375px;
    background: #f0f0f0;
    border: 1px solid #888;
    box-sizing: border-box;
    box-shadow: 0 0 7px rgba(0, 0, 0, 0.22), 3px 4px 8px rgba(0, 0, 0, 0.3);
    color: #333;
    font: 13.500px/16px "Liberation Serif", serif;
  }
  .dlg3 .titlebar {
    height: 36px;
    padding-left: 9px;
  }
  .dlg3 .logo {
    width: 15px;
    height: 20px;
  }
  .dlg3 .ttl {
    font-size: 14.400px;
    margin-left: 8px;
    width: 515px;
  }
  .dlg3 .qm {
    width: 54px;
    font-size: 14px;
  }
  .dlg3 .closex {
    width: 11px;
    height: 11px;
  }
  .c-head {
    height: 40px;
    font: bold 19.200px/46px "Liberation Sans", sans-serif;
    text-align: center;
    color: #111;
    padding-right: 6px;
    white-space: nowrap;
  }
  .c-cols {
    display: flex;
    padding-left: 10px;
    gap: 7px;
  }
  .dlg3 legend {
    line-height: 16px;
    padding: 0 2px;
    margin-left: 6px;
  }
  .levels {
    width: 91px;
    height: 128px;
    flex: none;
    padding: 8px 0 0 10px;
    margin-top: 2px;
  }
  .dlg3 .levels legend {
    margin-left: -3px;
  }
  .lv {
    height: 24.400px;
    display: flex;
    align-items: center;
  }
  .lv .radio {
    width: 15px;
    height: 15px;
  }
  .lv .rlabel {
    margin-left: 6px;
  }
  .tabs {
    width: 511px;
    flex: none;
  }
  .tabhead {
    display: flex;
    height: 22px;
    align-items: flex-end;
  }
  .tab {
    height: 19px;
    line-height: 18px;
    width: 160px;
    text-align: center;
    background: #f0f0f0;
    border: 1px solid #d9d9d9;
    border-bottom: none;
    box-sizing: border-box;
  }
  .tab.cur {
    height: 22px;
    width: 90px;
    line-height: 21px;
    background: #fff;
  }
  .pane {
    height: 229px;
    background: #fff;
    border: 1px solid #d9d9d9;
    box-sizing: border-box;
    padding: 11px 0 0 12px;
    display: flex;
    gap: 8px;
  }
  .params {
    width: 284px;
    height: 177px;
    padding: 9px 0 0 9px;
    flex: none;
  }
  .dlg3 .params legend {
    margin-left: -7px;
  }
  .prow {
    height: 29.200px;
    display: flex;
    align-items: center;
  }
  .prow.dis {
    color: #9c9c9c;
  }
  .plabel {
    width: 181px;
    flex: none;
    white-space: nowrap;
  }
  .plabel.short {
    width: 125px;
  }
  .cinp {
    width: 44px;
    height: 23px;
    box-sizing: border-box;
    background: #fff;
    border: 1.500px solid #888;
    line-height: 20px;
    padding-left: 2px;
    flex: none;
    overflow: hidden;
    color: #222;
  }
  .prow.dis .cinp {
    background: #e9e9e9;
    border-color: #dcdcdc;
    color: #9c9c9c;
  }
  .cinp.q {
    width: 100px;
  }
  .calc {
    width: 49px;
    height: 19px;
    line-height: 18px;
    text-align: center;
    margin-right: 7px;
    background: #c4c4c4;
    flex: none;
  }
  .prow .spin {
    width: 14px;
    height: 23px;
    margin-left: 2px;
    gap: 1px;
  }
  .prow .spin i {
    border-left-width: 5px;
    border-right-width: 5px;
  }
  .prow .spin .up {
    border-bottom-width: 7px;
  }
  .prow .spin .down {
    border-top-width: 7px;
  }
  .cu {
    margin-left: 6px;
  }
  .rightgroups {
    width: 192px;
    flex: none;
    display: flex;
    flex-direction: column;
    gap: 8px;
  }
  .opt {
    height: 60px;
    padding: 8px 0 0 10px;
  }
  .dlg3 .opt legend {
    display: flex;
    align-items: center;
    gap: 5px;
    margin-left: -10px;
  }
  .opt .check {
    width: 16px;
    height: 16px;
  }
  .ol1 {
    width: 93px;
    flex: none;
    white-space: nowrap;
  }
  .ol2 {
    width: 54px;
    flex: none;
  }
  .btns3 {
    margin: 9px 0 0;
    padding-left: 340px;
    display: flex;
    gap: 9px;
  }
  .btns3 .btn {
    width: 87px;
    height: 25px;
    line-height: 21px;
  }
</style>
